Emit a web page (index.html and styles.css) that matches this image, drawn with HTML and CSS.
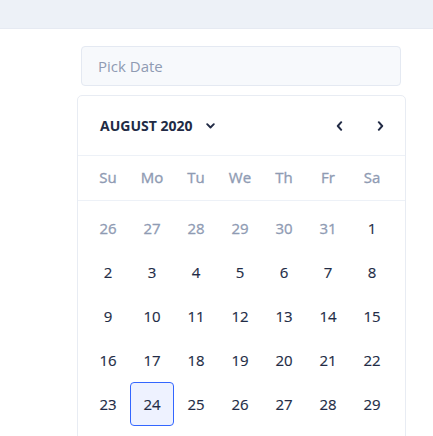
FILE: index.html
```html
<!DOCTYPE html>
<html>
<head>
<meta charset="utf-8">
<link rel="stylesheet" href="styles.css">
</head>
<body>
<div class="topbar"></div>
<main class="content">
  <div class="input">Pick Date</div>
  <div class="calendar">
    <div class="cal-header">
      <div class="month">
        <span>AUGUST 2020</span>
        <svg class="chev-down" width="9" height="6" viewBox="0 0 9 6"><polyline points="1.2,1.2 4.5,4.5 7.8,1.2" fill="none" stroke="#222b45" stroke-width="1.9" stroke-linecap="round" stroke-linejoin="round"/></svg>
      </div>
      <div class="nav">
        <svg width="7" height="10" viewBox="0 0 7 10"><polyline points="5.2,1.2 1.8,5 5.2,8.8" fill="none" stroke="#222b45" stroke-width="2" stroke-linecap="round" stroke-linejoin="round"/></svg>
        <svg width="7" height="10" viewBox="0 0 7 10"><polyline points="1.8,1.2 5.2,5 1.8,8.8" fill="none" stroke="#222b45" stroke-width="2" stroke-linecap="round" stroke-linejoin="round"/></svg>
      </div>
    </div>
    <div class="weekdays">
      <div>Su</div><div>Mo</div><div>Tu</div><div>We</div><div>Th</div><div>Fr</div><div>Sa</div>
    </div>
    <div class="days">
      <div class="day muted">26</div><div class="day muted">27</div><div class="day muted">28</div><div class="day muted">29</div><div class="day muted">30</div><div class="day muted">31</div><div class="day">1</div>
      <div class="day">2</div><div class="day">3</div><div class="day">4</div><div class="day">5</div><div class="day">6</div><div class="day">7</div><div class="day">8</div>
      <div class="day">9</div><div class="day">10</div><div class="day">11</div><div class="day">12</div><div class="day">13</div><div class="day">14</div><div class="day">15</div>
      <div class="day">16</div><div class="day">17</div><div class="day">18</div><div class="day">19</div><div class="day">20</div><div class="day">21</div><div class="day">22</div>
      <div class="day">23</div><div class="day selected">24</div><div class="day">25</div><div class="day">26</div><div class="day">27</div><div class="day">28</div><div class="day">29</div>
    </div>
  </div>
</main>
</body>
</html>
```

FILE: styles.css
```css
html, body {
  margin: 0;
  padding: 0;
  background: #ffffff;
  font-family: "Open Sans", "Liberation Sans", sans-serif;
  color: #222b45;
  overflow: hidden;
}

.topbar {
  height: 29px;
  background: #edf1f7;
  border-bottom: 1px solid #e6eaf2;
  box-sizing: border-box;
}

.content {
  padding: 17px 0 0 0;
  display: flex;
  flex-direction: column;
}

.input {
  margin-left: 81px;
  width: 320px;
  height: 40px;
  box-sizing: border-box;
  background: #f7f9fc;
  border: 1px solid #e4e9f2;
  border-radius: 4px;
  padding-left: 16px;
  display: flex;
  align-items: center;
  font-size: 15px;
  color: #8f9bb3;
}

.calendar {
  margin-top: 9px;
  margin-left: 77px;
  width: 329px;
  box-sizing: border-box;
  border: 1px solid #e8ecf3;
  border-radius: 5px;
  background: #fff;
}

.cal-header {
  height: 60px;
  box-sizing: border-box;
  display: flex;
  align-items: center;
  justify-content: space-between;
  padding: 0 21px 0 22px;
  border-bottom: 1px solid #edf1f7;
}

.month {
  display: flex;
  align-items: center;
  gap: 14px;
  font-size: 14px;
  font-weight: 700;
}

.chev-down {
  margin-top: 1px;
}

.nav {
  display: flex;
  align-items: center;
  gap: 34px;
}

.weekdays {
  display: grid;
  grid-template-columns: repeat(7, 44px);
  padding: 0 10px 0 8px;
  height: 45px;
  box-sizing: border-box;
  align-items: center;
  border-bottom: 1px solid #edf1f7;
}

.weekdays div {
  text-align: center;
  font-size: 15px;
  font-weight: 400;
  -webkit-text-stroke: 0.35px #8f9bb3;
  color: #8f9bb3;
  margin-top: -2px;
}

.days {
  display: grid;
  grid-template-columns: repeat(7, 44px);
  grid-auto-rows: 44px;
  padding: 5px 10px 60px 8px;
}

.day {
  display: flex;
  align-items: center;
  justify-content: center;
  font-size: 15px;
  font-weight: 400;
  -webkit-text-stroke: 0.15px #222b45;
  color: #222b45;
  border-radius: 4px;
  box-sizing: border-box;
}

.day.muted {
  color: #8f9bb3;
  -webkit-text-stroke: 0.3px #8f9bb3;
}

.day.selected {
  background: #eef2ff;
  border: 1px solid #3366ff;
}
```
